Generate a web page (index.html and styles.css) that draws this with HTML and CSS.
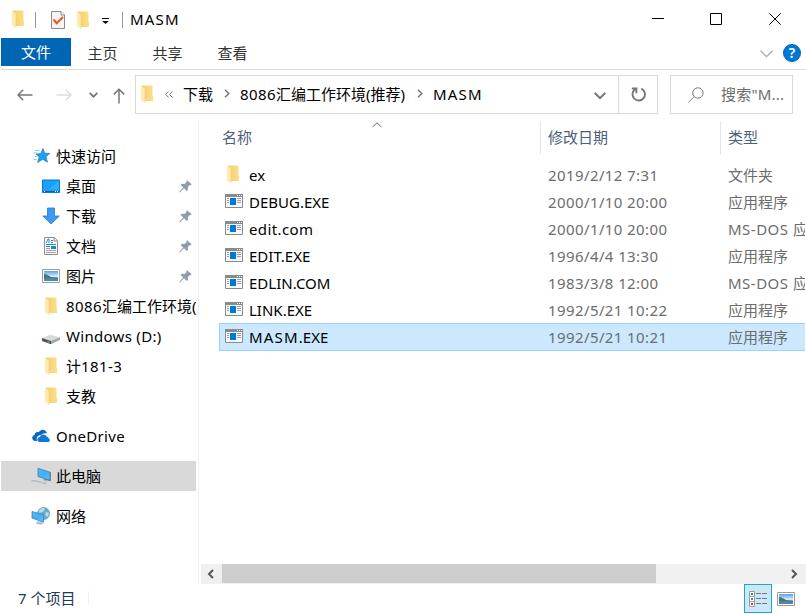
FILE: index.html
```html
<!DOCTYPE html>
<html lang="zh-CN">
<head>
    <meta charset="UTF-8">
    <title>MASM</title>
    <link rel="stylesheet" href="styles.css">
</head>

<body>
    <!-- Shared icons -->
    <svg class="sprite">
        <defs>
            <linearGradient id="sky" x1="0" y1="0" x2="0" y2="1">
                <stop offset="0" stop-color="#5f9fe8"/>
                <stop offset="0.55" stop-color="#d4ecfa"/>
                <stop offset="1" stop-color="#7db0d8"/>
            </linearGradient>
            <linearGradient id="screen" x1="0" y1="0" x2="1" y2="1">
                <stop offset="0" stop-color="#55bdfb"/>
                <stop offset="0.5" stop-color="#3fb0fa"/>
                <stop offset="1" stop-color="#5cc6ff"/>
            </linearGradient>
            <linearGradient id="gold" x1="0" y1="0" x2="1" y2="0">
                <stop offset="0" stop-color="#f5cf68"/>
                <stop offset="1" stop-color="#fbdf8d"/>
            </linearGradient>
        </defs>
        <symbol id="folder" viewBox="0 0 12 18">
            <path d="M1 0.5h10.5v10.5h0.5v5H1z" fill="url(#gold)"/>
            <path d="M0 1l4 2.5v14.2L0 15.5z" fill="#ffeab0"/>
            <path d="M4 3.5v14" stroke="#f3cc6c" stroke-width="0.6"/>
        </symbol>
        <symbol id="exe" viewBox="0 0 18 14">
            <path d="M0.5 0.5h17v13H0.5z" fill="#f8f8f8" stroke="#868b90"/>
            <path d="M0 0h18v3H0z" fill="#868b90"/>
            <path d="M12 1h1v1h-1zM14 1h1v1h-1zM16 1h1v1h-1z" fill="#fff"/>
            <path d="M5 4h6v7H5z" fill="#0078d7"/>
            <path d="M2 4.5h2M2 6.5h2M2 8.5h2M12 4.5h4M12 6.5h4M12 8.5h4" stroke="#9ca1a6"/>
        </symbol>
        <symbol id="pin" viewBox="0 0 13 13">
            <path d="M8 0.3L12.7 4.2L11.6 5.2L10.8 5L8.8 7.2L9 10L7.8 11L5 8.2L0.9 12.5L0.2 11.9L4.2 7.4L1.6 4.9L2.7 3.7L5.5 3.9L7.7 2L7.2 1.1z" fill="#919ca8"/>
        </symbol>
        <symbol id="picture" viewBox="0 0 18 14">
            <path d="M0.5 0.5h17v13H0.5z" fill="#fff" stroke="#9b9b9b"/>
            <path d="M2 2h14v10H2z" fill="url(#sky)"/>
            <path d="M2 5c3 0 5 2 7 3l7 0.5v1.5H2z" fill="#427b68"/>
            <path d="M2 9.5l7-0.5 7 1v2H2z" fill="#5087b0"/>
        </symbol>
    </svg>

    <div class="window">
        <!-- Title bar -->
        <div class="titlebar">
            <svg class="folder"><use href="#folder"/></svg>
            <span class="divider"></span>
            <svg class="check" viewBox="0 0 14 18">
                <path d="M0.5 0.5h9.5l3.5 3.5v13.5h-13z" fill="#f5f5f5" stroke="#8b8b8b"/>
                <path d="M10 0.5v3.5h3.5" fill="#fff" stroke="#8b8b8b"/>
                <path d="M2.5 8.5l3.2 3.7L12 6" fill="none" stroke="#e9571c" stroke-width="2"/>
            </svg>
            <svg class="folder quick"><use href="#folder"/></svg>
            <svg class="more" viewBox="0 0 7 6"><path d="M0 0h7v1H0zM0 3h7L3.5 6z" fill="#111"/></svg>
            <span class="divider second"></span>
            <span class="title latin-name">MASM</span>
            <div class="controls">
                <svg viewBox="0 0 12 12"><path d="M0 5.5h12"/></svg>
                <svg viewBox="0 0 12 12"><path d="M0.5 0.5h11v11H0.5z"/></svg>
                <svg viewBox="0 0 12 12"><path d="M0.3 0.3l11.4 11.4M11.7 0.3L0.3 11.7"/></svg>
            </div>
        </div>

        <!-- Ribbon tabs -->
        <div class="ribbon">
            <div class="tab active">文件</div>
            <div class="tab">主页</div>
            <div class="tab">共享</div>
            <div class="tab">查看</div>
            <svg class="expand" viewBox="0 0 13 8"><path d="M0.5 0.7L6.5 6.7L12.5 0.7" fill="none" stroke="#a4a8ac" stroke-width="1.3"/></svg>
            <div class="help">?</div>
        </div>

        <!-- Navigation and address bar -->
        <div class="navbar">
            <svg class="back" viewBox="0 0 16 12"><path d="M15.5 6H1.2M6.2 0.8L1 6l5.2 5.2"/></svg>
            <svg class="forward" viewBox="0 0 16 12"><path d="M0.5 6h14.3M9.8 0.8L15 6l-5.2 5.2"/></svg>
            <svg class="recent" viewBox="0 0 9 6"><path d="M0.6 0.8l3.9 3.9L8.4 0.8"/></svg>
            <svg class="up" viewBox="0 0 12 16"><path d="M6 15.5V1.2M0.8 6.4L6 1.2l5.2 5.2"/></svg>
            <div class="address">
                <svg class="folder"><use href="#folder"/></svg>
                <svg class="chevrons" viewBox="0 0 8 7"><path d="M3.7 0.5l-3 3 3 3M7.5 0.5l-3 3 3 3"/></svg>
                <span class="crumb">下载</span>
                <svg class="chevron" viewBox="0 0 6 9"><path d="M1 0.7l3.8 3.8L1 8.3"/></svg>
                <span class="crumb long"><span class="digits">8086</span>汇编工作环境(推荐)</span>
                <svg class="chevron" viewBox="0 0 6 9"><path d="M1 0.7l3.8 3.8L1 8.3"/></svg>
                <span class="crumb latin-name">MASM</span>
                <svg class="drop" viewBox="0 0 12 8"><path d="M0.8 1L6 6.2 11.2 1"/></svg>
                <div class="refresh">
                    <svg viewBox="0 0 15 15"><path d="M10.4 1.7A6.2 6.2 0 1 1 4.2 2.2M0.8 1.5h4.6v4.8"/></svg>
                </div>
            </div>
            <div class="search">
                <svg viewBox="0 0 16 16"><circle cx="9.9" cy="6" r="5.2"/><path d="M6.1 9.7L0.5 15.4"/></svg>
                <span>搜索"M...</span>
            </div>
        </div>

        <div class="main">
            <!-- Sidebar -->
            <div class="sidebar">
                <div class="item root">
                    <svg viewBox="0 0 18 18">
                        <path d="M11 1.5l1.8 4.8 5 0.1-3.9 3.4 1.6 5.4-4.7-2.9-5.2 3.2 1.7-5.6L4 7l4.8-0.4z" fill="#1da1f2" stroke="#1779ba" stroke-width="0.7"/>
                        <path d="M3 3.5h4.5M1 6h4M3 9.5h2.5M1.5 12.5h3" stroke="#6fc0f5" stroke-width="0.8"/>
                    </svg>
                    <span>快速访问</span>
                </div>
                <div class="item">
                    <svg viewBox="0 0 18 18">
                        <path d="M0.5 3h17v12.5H0.5z" fill="#18a1ff" stroke="#0b78c8"/>
                        <path d="M17 3.5v9H7z" fill="#31afff"/>
                        <path d="M1 14.5h16" stroke="#17608e"/>
                        <path d="M2 14.5h1M13 14.5h1M15 14.5h1" stroke="#fff"/>
                    </svg>
                    <span>桌面</span>
                    <svg class="pin"><use href="#pin"/></svg>
                </div>
                <div class="item">
                    <svg viewBox="0 0 18 18"><path d="M5.5 1h7v8h4.8L9 17 0.8 9h4.7z" fill="#3c9af0" stroke="#2879c5" stroke-width="0.8"/></svg>
                    <span>下载</span>
                    <svg class="pin"><use href="#pin"/></svg>
                </div>
                <div class="item">
                    <svg viewBox="0 0 18 18">
                        <path d="M2.5 0.5h10l3 3v14h-13z" fill="#fff" stroke="#8c8c8c"/>
                        <path d="M12 0.5V4h3.5" fill="#eee" stroke="#8c8c8c"/>
                        <path d="M4 6L6 2h1v4M9 3.5h2M9 5.5h2M4 7.5h10M4 9.5h4" fill="none" stroke="#168ad5"/>
                        <path d="M4 11.5h4M4 13.5h10M4 15.5h10" stroke="#a0a0a0"/>
                        <path d="M9 9h5v3H9z" fill="#2784bd"/>
                    </svg>
                    <span>文档</span>
                    <svg class="pin"><use href="#pin"/></svg>
                </div>
                <div class="item">
                    <svg class="wide"><use href="#picture"/></svg>
                    <span>图片</span>
                    <svg class="pin"><use href="#pin"/></svg>
                </div>
                <div class="item">
                    <svg class="folder"><use href="#folder"/></svg>
                    <span><span class="digits">8086</span>汇编工作环境(</span>
                </div>
                <div class="item">
                    <svg viewBox="0 0 18 18">
                        <path d="M0 11l8-3.2 10 2.4-9 3.8z" fill="#d9dadb"/>
                        <path d="M0 11l9 3v3.3L0 14z" fill="#4c5356"/>
                        <path d="M9 14l9-3.8v2.6l-9 4.5z" fill="#a2a5a7"/>
                        <path d="M5.5 14l2 0.7v1.6l-2-0.6z" fill="#33d34a"/>
                    </svg>
                    <span class="drive">Windows (D:)</span>
                </div>
                <div class="item">
                    <svg class="folder"><use href="#folder"/></svg>
                    <span>计<span class="digits">181-3</span></span>
                </div>
                <div class="item">
                    <svg class="folder"><use href="#folder"/></svg>
                    <span>支教</span>
                </div>
                <div class="item root spaced">
                    <svg viewBox="0 0 18 18">
                        <path d="M5 14H3.2C-0.5 13.5-0.8 8.8 2.5 8c0.2-2.5 2.4-3.6 4.3-2.7C8.6 1.5 14 2 15 6.4c-3-0.7-5 0.3-6 2-3-0.5-5 2-4 5.6z" fill="#0a68be"/>
                        <path d="M7.8 15c-3.5-0.2-3.3-5 0.2-5 0.9-3.2 5.6-3.4 6.7-0.2 1.8 0 2 1.2 1.9 1.7 1.9 0.6 1.6 3.5-0.5 3.5z" fill="#0b7bdb"/>
                    </svg>
                    <span class="drive">OneDrive</span>
                </div>
                <div class="item root spaced selected">
                    <svg viewBox="0 0 18 18">
                        <path d="M6 1.3l12.2 4v8L6 9.5z" fill="url(#screen)" stroke="#3682b2" stroke-width="0.8"/>
                        <path d="M18.2 5.3v8.5L12 12" fill="none" stroke="#596b76" stroke-width="0.8"/>
                        <path d="M11 12.5l4 1.8 1-1" fill="none" stroke="#a0abb1"/>
                        <path d="M-0.5 14l3.5-0.3 11 3" fill="none" stroke="#aab6bd" stroke-width="1.5" stroke-dasharray="2 0.6"/>
                    </svg>
                    <span>此电脑</span>
                </div>
                <div class="item root spaced">
                    <svg viewBox="0 0 18 18">
                        <circle cx="11.6" cy="6.5" r="6.4" fill="#66acc8"/>
                        <path d="M7 4c2-4 5-3 6-2l-2 3-4 1zM14 5l3 1-1 4-3-2z" fill="#b8dbe4"/>
                        <path d="M0 4.5l11.5 3.2v7.5L0 11z" fill="url(#screen)" stroke="#3682b2" stroke-width="0.8"/>
                        <path d="M6 13.5v2l-2 0.8 5 1 2-1-3-1" fill="#bac7ce" stroke="#8c9aa3" stroke-width="0.5"/>
                    </svg>
                    <span>网络</span>
                </div>
            </div>

            <!-- File list -->
            <div class="files">
                <div class="columns">
                    <div class="name">名称
                        <svg class="sort" viewBox="0 0 10 6"><path d="M0.5 5.2L5 0.7l4.5 4.5" fill="none" stroke="#666"/></svg>
                    </div>
                    <div class="date">修改日期</div>
                    <div class="type">类型</div>
                </div>
                <div class="rows">
                    <div class="row">
                        <div class="name"><svg class="folder"><use href="#folder"/></svg>ex</div>
                        <div class="date">2019/2/12 7:31</div>
                        <div class="type">文件夹</div>
                    </div>
                    <div class="row">
                        <div class="name"><svg class="exe"><use href="#exe"/></svg>DEBUG.EXE</div>
                        <div class="date">2000/1/10 20:00</div>
                        <div class="type">应用程序</div>
                    </div>
                    <div class="row">
                        <div class="name loose"><svg class="exe"><use href="#exe"/></svg>edit.com</div>
                        <div class="date">2000/1/10 20:00</div>
                        <div class="type"><span class="dos">MS-DOS </span>应用程序</div>
                    </div>
                    <div class="row">
                        <div class="name"><svg class="exe"><use href="#exe"/></svg>EDIT.EXE</div>
                        <div class="date">1996/4/4 13:30</div>
                        <div class="type">应用程序</div>
                    </div>
                    <div class="row">
                        <div class="name"><svg class="exe"><use href="#exe"/></svg>EDLIN.COM</div>
                        <div class="date">1983/3/8 12:00</div>
                        <div class="type"><span class="dos">MS-DOS </span>应用程序</div>
                    </div>
                    <div class="row">
                        <div class="name"><svg class="exe"><use href="#exe"/></svg>LINK.EXE</div>
                        <div class="date">1992/5/21 10:22</div>
                        <div class="type">应用程序</div>
                    </div>
                    <div class="row selected">
                        <div class="name"><svg class="exe"><use href="#exe"/></svg><span class="latin-name">MASM</span>.EXE</div>
                        <div class="date">1992/5/21 10:21</div>
                        <div class="type">应用程序</div>
                    </div>
                </div>
                <div class="scrollbar">
                    <svg viewBox="0 0 7 10"><path d="M6 1L2 5l4 4"/></svg>
                    <div class="thumb"></div>
                    <svg class="right" viewBox="0 0 7 10"><path d="M1 1l4 4-4 4"/></svg>
                </div>
            </div>
        </div>

        <!-- Status bar -->
        <div class="statusbar">
            <span class="count">7 个项目</span>
            <div class="view active">
                <svg viewBox="0 0 18 16">
                    <path d="M0.5 0.5h5v5h-5zM0.5 5.5h5v5h-5zM0.5 10.5h5v5h-5z" fill="#fff" stroke="#999"/>
                    <path d="M2 2h2v2H2z" fill="#318b81"/>
                    <path d="M2 7h2v2H2z" fill="#4b83cb"/>
                    <path d="M2 12h2v2H2z" fill="#d33a20"/>
                    <path d="M7 2.5h5M13 2.5h5M7 7.5h5M13 7.5h5M7 12.5h5M13 12.5h5" stroke="#777"/>
                </svg>
            </div>
            <div class="view">
                <svg class="wide"><use href="#picture"/></svg>
            </div>
        </div>
    </div>
</body>
</html>
```
FILE: styles.css
```css
* {
    box-sizing: border-box;
}

body {
    margin: 0;
    background: #fff;
    font-family: "Noto Sans", "Noto Sans CJK SC", sans-serif;
    font-size: 15px;
    line-height: 20px;
    color: #000;
    overflow: hidden;
}

svg {
    display: block;
    flex: none;
}

.sprite {
    position: absolute;
    width: 0;
    height: 0;
}

.window {
    width: 806px;
    height: 614px;
    display: flex;
    flex-direction: column;
    white-space: nowrap;
}

.folder {
    width: 12px;
    height: 18px;
}

.latin-name {
    letter-spacing: 1.2px;
}

.digits {
    letter-spacing: 0.4px;
}

/* Title bar */
.titlebar {
    height: 38px;
    display: flex;
    align-items: center;
    padding-left: 12px;
}

.divider {
    width: 1px;
    height: 16px;
    margin: 1px 15px 0 11px;
    background: #999;
}

.check {
    width: 14px;
    height: 18px;
    margin-top: 2px;
}

.quick {
    margin: 2px 0 0 12px;
}

.more {
    width: 7px;
    height: 6px;
    margin: 3px 0 0 13px;
}

.divider.second {
    margin: 1px 7px 0 13px;
}

.controls {
    display: flex;
    gap: 46px;
    margin: 0 25px 0 auto;
}

.controls svg {
    width: 12px;
    height: 12px;
    fill: none;
    stroke: #000;
}

.controls svg:last-child {
    margin-left: 1px;
}

/* Ribbon */
.ribbon {
    height: 32px;
    margin-left: 1px;
    border-bottom: 1px solid #dadbdc;
    display: flex;
    align-items: flex-start;
}

.tab {
    width: 65px;
    height: 28px;
    line-height: 31px;
    padding-right: 2px;
    text-align: center;
    color: #333;
}

.tab.active {
    width: 70px;
    line-height: 29px;
    padding-right: 0;
    background: #0066b4;
    color: #fff;
}

.expand {
    width: 13px;
    height: 8px;
    margin: 12px 10px 0 auto;
}

.help {
    width: 18px;
    height: 18px;
    margin: 6px 5px 0 0;
    border-radius: 50%;
    border: 1px solid #0062af;
    background: #0078d7;
    color: #fff;
    font-size: 14px;
    font-weight: 600;
    line-height: 16px;
    text-align: center;
}

/* Address bar */
.navbar {
    height: 51px;
    display: flex;
    align-items: flex-start;
    padding-top: 5px;
}

.navbar svg {
    fill: none;
    stroke: #777;
    stroke-width: 1.5;
}

.navbar .back,
.navbar .forward {
    width: 16px;
    height: 12px;
    margin: 14px 0 0 17px;
}

.navbar .forward {
    margin-left: 23px;
    stroke: #ddd;
}

.navbar .recent {
    width: 9px;
    height: 6px;
    margin: 17px 0 0 17px;
    stroke-width: 1.7;
}

.navbar .up {
    width: 12px;
    height: 16px;
    margin: 13px 0 0 15px;
}

.address {
    width: 523px;
    height: 39px;
    margin-left: 10px;
    border: 1px solid #d9d9d9;
    display: flex;
    align-items: center;
    padding-left: 5px;
}

.address .folder {
    stroke: none;
    margin-top: -1px;
}

.address .chevrons {
    width: 8px;
    height: 7px;
    margin: 0 10px 0 12px;
    stroke-width: 1;
}

.address .chevron {
    width: 6px;
    height: 9px;
    margin: -2px 10px 0 11px;
}

.crumb {
    margin-top: -2px;
}

.crumb.long {
    width: 166px;
}

.address .drop {
    width: 12px;
    height: 8px;
    margin: 2px 12px 0 auto;
    stroke-width: 2;
}

.refresh {
    width: 39px;
    height: 37px;
    border-left: 1px solid #d9d9d9;
    display: flex;
    align-items: center;
    justify-content: center;
}

.refresh svg {
    width: 15px;
    height: 15px;
    margin-left: 1px;
    stroke-width: 1.9;
}

.search {
    width: 123px;
    height: 39px;
    margin-left: 12px;
    border: 1px solid #d9d9d9;
    display: flex;
    align-items: center;
    padding-left: 17px;
    color: #6d6d6d;
}

.search svg {
    width: 16px;
    height: 16px;
    margin-right: 17px;
    stroke-width: 1;
}

.search span {
    margin-top: -2px;
    letter-spacing: 0.2px;
}

/* Main area */
.main {
    height: 463px;
    display: flex;
}

.sidebar {
    width: 199px;
    height: 463px;
    padding: 20px 2px 0 1px;
    border-right: 1px solid #f1f1f1;
    overflow: hidden;
}

.item {
    width: 195px;
    height: 30px;
    display: flex;
    align-items: center;
    padding-left: 41px;
}

.item svg {
    width: 18px;
    height: 18px;
    margin-right: 6px;
    overflow: visible;
}

.item .folder {
    width: 12px;
    margin: -1px 9px 0 3px;
}

.item .wide,
.view .wide {
    width: 18px;
    height: 14px;
}

.item .pin {
    width: 13px;
    height: 13px;
    margin: 0 4px 0 auto;
}

.item.root {
    padding-left: 31px;
}

.item.spaced {
    margin-top: 10px;
}

.item.selected {
    background: #d9d9d9;
}

.drive {
    letter-spacing: 0.3px;
}

/* File list */
.files {
    width: 607px;
    height: 463px;
    padding-left: 2px;
    display: flex;
    flex-direction: column;
}

.columns {
    height: 33px;
    display: flex;
    color: #4c607a;
    line-height: 32px;
}

.columns .name {
    width: 339px;
    padding-left: 21px;
    position: relative;
}

.columns .sort {
    position: absolute;
    left: 171px;
    top: 1px;
    width: 10px;
    height: 6px;
}

.columns .date {
    width: 180px;
    padding-left: 7px;
    border-left: 1px solid #e5e5e5;
}

.columns .type {
    padding-left: 7px;
    border-left: 1px solid #e5e5e5;
}

.rows {
    flex: 1;
    padding: 7px 1px 0 18px;
}

.row {
    height: 28px;
    margin-bottom: -1px;
    display: flex;
    align-items: center;
    border: 1px solid transparent;
    border-right: 0;
    overflow: hidden;
}

.row.selected {
    background: #cce8ff;
    border-color: #99d1ff;
}

.row .name,
.row .date,
.row .type {
    flex: none;
}

.row .name {
    width: 328px;
    display: flex;
    align-items: center;
}

.row .name.loose {
    letter-spacing: 0.4px;
}

.row .folder {
    margin: -3px 10px 0 7px;
}

.row .exe {
    width: 18px;
    height: 14px;
    margin: -2px 6px 0 5px;
}

.row .date {
    width: 180px;
    color: #6d6d6d;
    letter-spacing: 0.4px;
}

.row .type {
    color: #6d6d6d;
}

.dos {
    letter-spacing: 0.5px;
}

.scrollbar {
    height: 20px;
    background: #f0f0f0;
    display: flex;
    align-items: center;
    padding-left: 6px;
}

.scrollbar svg {
    width: 7px;
    height: 10px;
    fill: none;
    stroke: #555;
    stroke-width: 2;
}

.scrollbar .right {
    margin: 0 8px 0 auto;
}

.thumb {
    width: 434px;
    height: 19px;
    margin: 0 0 1px 8px;
    background: #cdcdcd;
}

/* Status bar */
.statusbar {
    height: 30px;
    display: flex;
    align-items: flex-start;
    color: #1e395b;
}

.count {
    width: 71px;
    margin: 7px auto 0 18px;
    border-right: 1px solid #f1f1f1;
    line-height: 14px;
}

.view {
    width: 28px;
    height: 29px;
    display: flex;
    align-items: center;
    justify-content: center;
}

.view:last-child {
    margin-right: 6px;
}

.view.active {
    border: 1px solid #26a0da;
    background: #cbe8f6;
}

.view svg {
    width: 18px;
    height: 16px;
}
```
